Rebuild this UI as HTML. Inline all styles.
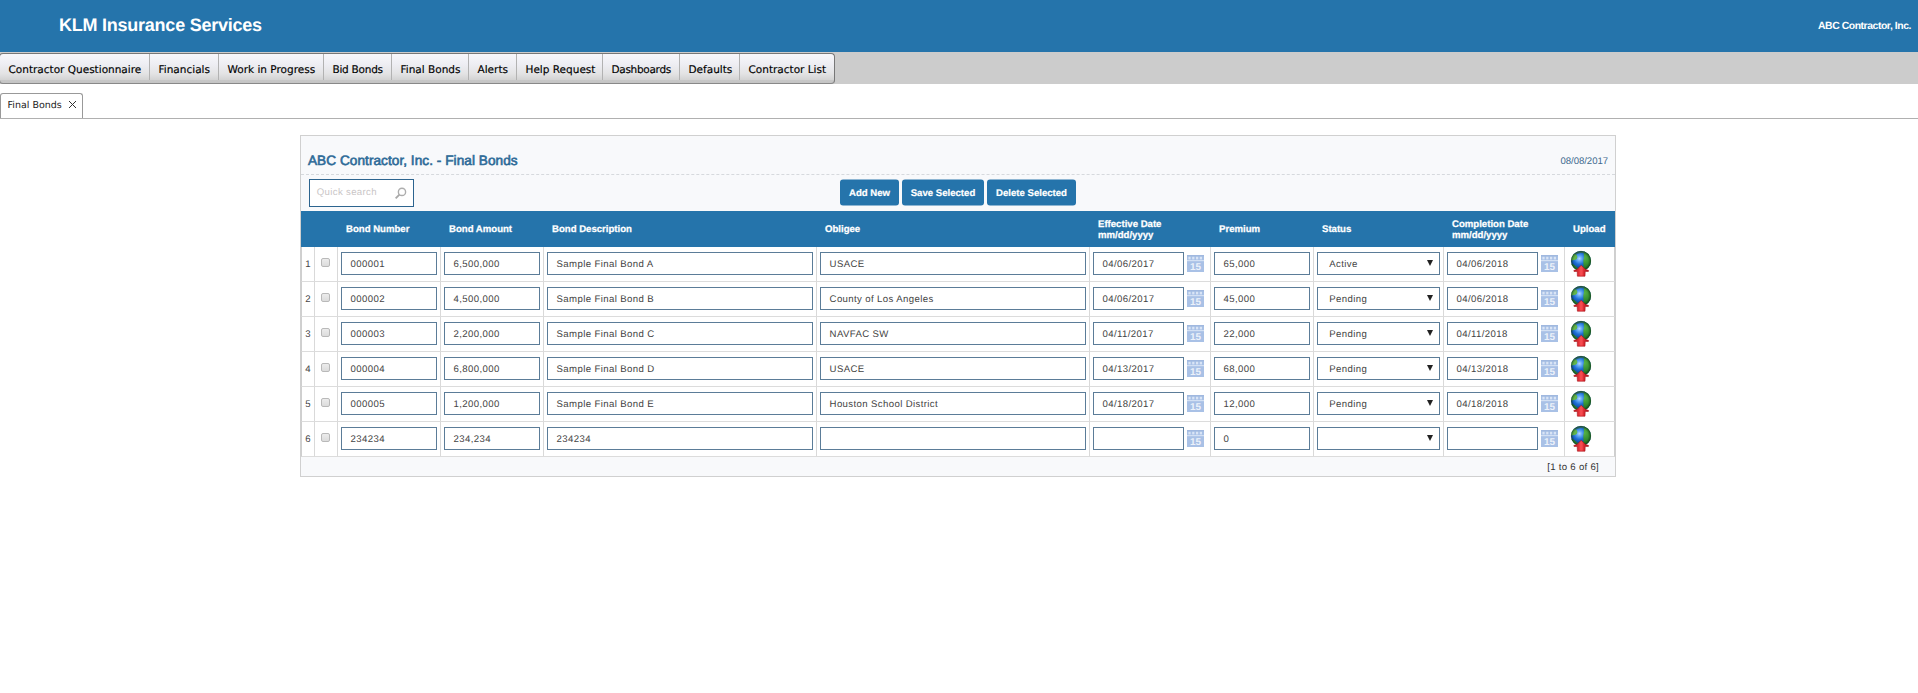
<!DOCTYPE html>
<html lang="en">
<head>
<meta charset="utf-8">
<title>KLM Insurance Services - Final Bonds</title>
<style>
*{box-sizing:border-box;margin:0;padding:0}
html,body{width:1918px;height:693px;overflow:hidden;background:#fff;font-family:"Liberation Sans",Arial,sans-serif;text-rendering:geometricPrecision}
body{position:relative}
#hdr{position:absolute;left:0;top:0;width:1918px;height:52px;background:#2574ab;color:#fff}
#hdr .brand{position:absolute;left:59px;top:14px;font-weight:bold;font-size:18px;line-height:22px;letter-spacing:-0.24px;white-space:nowrap}
#hdr .user{position:absolute;right:7px;top:20px;font-weight:bold;font-size:10.4px;line-height:13px;letter-spacing:-0.43px;white-space:nowrap}
#menuband{position:absolute;left:0;top:52px;width:1918px;height:32px;background:#cccccc}
#menu{position:absolute;left:-1px;top:1px;height:31px;width:836px;border:1px solid #777;border-bottom-color:#888;border-radius:4px;display:flex;overflow:hidden;padding-left:0;
 background:linear-gradient(#f7f7fb 0%,#eeeef3 35%,#e3e3e4 68%,#d4d4d4 88%,#c7c7c7 91%,#c4c4c4 100%)}
#menu a{display:block;flex:none;height:29px;line-height:32px;font-family:"DejaVu Sans","Liberation Sans",sans-serif;font-size:10.5px;color:#000;-webkit-text-stroke:0.15px #000;padding:0 0 0 8.5px;position:relative;white-space:nowrap;text-decoration:none}
#menu a::after{content:"";position:absolute;right:0;top:0;width:1px;height:26px;background:#b2b2b2}
#menu a:last-child::after{display:none}
#tabs{position:absolute;left:0;top:93px;width:1918px;height:26px;border-bottom:1px solid #b0b0b0}
#tabs .tab{position:absolute;left:0;top:0;width:83px;height:25px;border:1px solid #999;border-bottom:0;border-radius:3px 3px 0 0;background:#fff;font-family:"DejaVu Sans","Liberation Sans",sans-serif;font-size:9.5px;line-height:24px;color:#222;padding-left:6.5px;white-space:nowrap}
#tabs .tab .x{position:absolute;left:67px;top:6px;width:9px;height:9px}
#panel{position:absolute;left:300px;top:135px;width:1316px;height:342px;border:1px solid #d0d0d0;background:#f8f9fb}
#title{position:absolute;left:7px;top:15.6px;font-size:13.6px;line-height:18px;color:#2e6b98;letter-spacing:0.055px;white-space:nowrap;-webkit-text-stroke:0.62px #2e6b98}
#date{position:absolute;right:7px;top:20px;font-size:9.6px;line-height:12px;color:#3f6a8f;letter-spacing:-0.05px}
#dash{position:absolute;left:0;top:38px;width:1314px;height:0;border-top:1px dashed #d6d9dd}
#search{position:absolute;left:8px;top:43px;width:105px;height:28px;border:1px solid #2c648f;background:#fff;font-size:9.6px;line-height:26px;color:#c9c5c6;padding:0.4px 0 0 6.8px;letter-spacing:0.34px;white-space:nowrap}
#search svg{position:absolute;left:84.4px;top:6.6px;width:13px;height:13px}
.btn{position:absolute;top:44px;height:26px;transform:translateY(-0.45px);background:#2574ab;color:#fff;font-weight:bold;font-size:9.6px;line-height:27px;text-align:center;border-radius:3px;letter-spacing:0;-webkit-text-stroke:0.2px #fff;white-space:nowrap}
#grid{position:absolute;left:0;top:75px;width:1314px;border-collapse:separate;border-spacing:0;table-layout:fixed;background:#fff}
#grid th{background:#2574ab;color:#fff;-webkit-text-stroke:0.25px #fff;height:36px;font-size:9.6px;line-height:11px;font-weight:bold;text-align:left;padding:0 0 0 8px;letter-spacing:0;white-space:nowrap;vertical-align:middle}
#grid td{height:35px;border-right:1px solid #d9d9d9;border-bottom:1px solid #dcdcdc;padding:0;vertical-align:top;position:relative;font-size:10px;color:#333}
#grid td:last-child{border-right:1px solid #cfcfcf}
#grid td .in{position:absolute;left:3px;top:5px;right:3px;height:23px;border:1px solid #5b7c98;background:#fff;font-size:9.6px;line-height:21px;padding:1px 0 0 8.6px;color:#444;white-space:nowrap;letter-spacing:0.38px}
#grid td .in.d{right:26px}
#grid td .cal{position:absolute;right:6px;top:8px;width:17px;height:17px}
#grid td .sel::after{content:"";position:absolute;right:6.4px;top:7.2px;border-left:3.3px solid transparent;border-right:3.3px solid transparent;border-top:6px solid #222}
#grid td .sel{padding-left:11.3px}
#grid td.n{text-align:center;line-height:33px;padding-top:1px;font-size:9.6px;padding-left:0;border-left:1px solid #cfcfcf;color:#444}
#grid td .cb{position:absolute;left:6px;top:11px;width:9px;height:9px;border:1px solid #b9b9b9;border-radius:2px;background:linear-gradient(#ececec,#dcdcdc)}
#grid td .up{position:absolute;left:5px;top:3px;width:22px;height:28px}
#foot{position:absolute;right:16px;top:325px;font-size:9.6px;line-height:13px;color:#333;letter-spacing:0.28px}
#grid th.two{padding-top:2px}
#menu a.t1{letter-spacing:-0.25px}
#menu a.t2{letter-spacing:-0.3px}
</style>
</head>
<body>
<svg width="0" height="0" style="position:absolute">
<defs>
<radialGradient id="gl" gradientUnits="userSpaceOnUse" cx="9.4" cy="8.6" r="9.5"><stop offset="0" stop-color="#b4d8ff"/><stop offset="0.28" stop-color="#5ea6f4"/><stop offset="0.6" stop-color="#1f6fd6"/><stop offset="1" stop-color="#0e4aa0"/></radialGradient>
<radialGradient id="gg" gradientUnits="userSpaceOnUse" cx="14" cy="8" r="12"><stop offset="0" stop-color="#58b448"/><stop offset="0.55" stop-color="#348f30"/><stop offset="1" stop-color="#1e6422"/></radialGradient>
<radialGradient id="gs" gradientUnits="userSpaceOnUse" cx="11" cy="10.9" r="10"><stop offset="0.72" stop-color="#0a2a14" stop-opacity="0"/><stop offset="1" stop-color="#0a2a14" stop-opacity="0.55"/></radialGradient>
<linearGradient id="gr" x1="0" y1="0" x2="1" y2="0"><stop offset="0" stop-color="#bc1a22"/><stop offset="0.5" stop-color="#f43c42"/><stop offset="1" stop-color="#ac1018"/></linearGradient>
<clipPath id="gc"><circle cx="11" cy="10.9" r="10"/></clipPath>
<symbol id="cal" viewBox="0 0 17 17"><rect x="0" y="0" width="17" height="17" fill="#a9c1e6"/><rect x="0" y="0" width="17" height="1.4" fill="#a0b8df"/><g fill="#d9e4f5"><rect x="1.4" y="1.8" width="2.2" height="2.6"/><rect x="5.2" y="1.8" width="2.2" height="2.6"/><rect x="9" y="1.8" width="2.2" height="2.6"/><rect x="12.8" y="1.8" width="2.2" height="2.6"/></g><rect x="0" y="5" width="17" height="1.2" fill="#d3e0f3"/><text x="8.6" y="15" font-family="Liberation Sans, sans-serif" font-size="10" font-weight="bold" fill="#ecf1fa" text-anchor="middle">15</text></symbol>
<symbol id="up" viewBox="0 0 22 28"><circle cx="11" cy="10.9" r="10" fill="url(#gl)"/><g clip-path="url(#gc)"><path d="M14 0 C13 3.5 14.6 6 13.6 9 C12.8 12 14 14 13.2 17 C12.8 19 13.6 20.5 12.8 22 L23 22 L23 0 Z" fill="url(#gg)"/><path d="M0 4.2 L5.2 4 C8 5 8 8.6 5.4 9.8 C3.6 10.6 2.2 10 0 10.8 Z" fill="#62b64a"/><path d="M0 13.6 C3 13.6 4.8 15.2 6.2 16.8 C7.6 18.2 9.2 19 10.2 22 L0 22 Z" fill="#2e8830"/><path d="M3 0 H16 V3.4 C12.5 2.4 8 3 5.2 4.6 Z" fill="#3a7566" fill-opacity="0.85"/><circle cx="11" cy="10.9" r="10" fill="url(#gs)"/></g><circle cx="11" cy="10.9" r="9.7" fill="none" stroke="#14451c" stroke-opacity="0.5" stroke-width="0.6"/><path d="M11.2 15.3 L15.2 19.2 L18.6 20.6 L18.4 21.4 L15.2 21.4 L15 26.2 L7.4 26.2 L7.2 21.4 L4 21.4 L3.8 20.6 L7.2 19.2 Z" fill="url(#gr)" stroke="#a8121a" stroke-width="0.6" stroke-linejoin="round"/><path d="M9.6 17.4 L11.2 16 L12.8 17.4 L12.8 25.4 L9.6 25.4 Z" fill="#ff6a6a" fill-opacity="0.35"/></symbol>
</defs></svg>

<div id="hdr"><div class="brand">KLM Insurance Services</div><div class="user">ABC Contractor, Inc.</div></div>
<div id="menuband"><div id="menu"><a style="width:150px">Contractor Questionnaire</a><a style="width:69px">Financials</a><a style="width:105px">Work in Progress</a><a class="t1" style="width:68px">Bid Bonds</a><a style="width:77px">Final Bonds</a><a style="width:48px">Alerts</a><a style="width:86px">Help Request</a><a class="t2" style="width:77px">Dashboards</a><a style="width:60px">Defaults</a><a style="width:94px">Contractor List</a></div></div>
<div id="tabs"><div class="tab"><span>Final Bonds</span><svg class="x" viewBox="0 0 9 9"><path d="M1 1 L8 8 M8 1 L1 8" stroke="#333" stroke-width="1" fill="none"/></svg></div></div>
<div id="panel">
<div id="title">ABC Contractor, Inc. - Final Bonds</div>
<div id="date">08/08/2017</div>
<div id="dash"></div>
<div id="search"><span>Quick search</span><svg width="14" height="14" viewBox="0 0 14 14"><circle cx="8.6" cy="5.3" r="3.9" fill="none" stroke="#adadad" stroke-width="1.5"/><path d="M5.8 8.2 L1.8 12.2" stroke="#a8a8a8" stroke-width="2"/></svg></div>
<div class="btn" style="left:539px;width:59px">Add New</div>
<div class="btn" style="left:601px;width:82px">Save Selected</div>
<div class="btn" style="left:686px;width:89px">Delete Selected</div>
<table id="grid">
<colgroup><col style="width:14px"><col style="width:23px"><col style="width:103px"><col style="width:103px"><col style="width:273px"><col style="width:273px"><col style="width:121px"><col style="width:103px"><col style="width:130px"><col style="width:121px"><col style="width:50px"></colgroup>
<thead><tr><th></th><th></th><th>Bond Number</th><th>Bond Amount</th><th>Bond Description</th><th>Obligee</th><th class="two">Effective Date<br>mm/dd/yyyy</th><th>Premium</th><th>Status</th><th class="two">Completion Date<br>mm/dd/yyyy</th><th>Upload</th></tr></thead>
<tbody>
<tr><td class="n">1</td><td><div class="cb"></div></td><td><div class="in">000001</div></td><td><div class="in">6,500,000</div></td><td><div class="in">Sample Final Bond A</div></td><td><div class="in">USACE</div></td><td><div class="in d">04/06/2017</div><svg class="cal"><use href="#cal"/></svg></td><td><div class="in">65,000</div></td><td><div class="in sel">Active</div></td><td><div class="in d">04/06/2018</div><svg class="cal"><use href="#cal"/></svg></td><td><svg class="up"><use href="#up"/></svg></td></tr>
<tr><td class="n">2</td><td><div class="cb"></div></td><td><div class="in">000002</div></td><td><div class="in">4,500,000</div></td><td><div class="in">Sample Final Bond B</div></td><td><div class="in">County of Los Angeles</div></td><td><div class="in d">04/06/2017</div><svg class="cal"><use href="#cal"/></svg></td><td><div class="in">45,000</div></td><td><div class="in sel">Pending</div></td><td><div class="in d">04/06/2018</div><svg class="cal"><use href="#cal"/></svg></td><td><svg class="up"><use href="#up"/></svg></td></tr>
<tr><td class="n">3</td><td><div class="cb"></div></td><td><div class="in">000003</div></td><td><div class="in">2,200,000</div></td><td><div class="in">Sample Final Bond C</div></td><td><div class="in">NAVFAC SW</div></td><td><div class="in d">04/11/2017</div><svg class="cal"><use href="#cal"/></svg></td><td><div class="in">22,000</div></td><td><div class="in sel">Pending</div></td><td><div class="in d">04/11/2018</div><svg class="cal"><use href="#cal"/></svg></td><td><svg class="up"><use href="#up"/></svg></td></tr>
<tr><td class="n">4</td><td><div class="cb"></div></td><td><div class="in">000004</div></td><td><div class="in">6,800,000</div></td><td><div class="in">Sample Final Bond D</div></td><td><div class="in">USACE</div></td><td><div class="in d">04/13/2017</div><svg class="cal"><use href="#cal"/></svg></td><td><div class="in">68,000</div></td><td><div class="in sel">Pending</div></td><td><div class="in d">04/13/2018</div><svg class="cal"><use href="#cal"/></svg></td><td><svg class="up"><use href="#up"/></svg></td></tr>
<tr><td class="n">5</td><td><div class="cb"></div></td><td><div class="in">000005</div></td><td><div class="in">1,200,000</div></td><td><div class="in">Sample Final Bond E</div></td><td><div class="in">Houston School District</div></td><td><div class="in d">04/18/2017</div><svg class="cal"><use href="#cal"/></svg></td><td><div class="in">12,000</div></td><td><div class="in sel">Pending</div></td><td><div class="in d">04/18/2018</div><svg class="cal"><use href="#cal"/></svg></td><td><svg class="up"><use href="#up"/></svg></td></tr>
<tr><td class="n">6</td><td><div class="cb"></div></td><td><div class="in">234234</div></td><td><div class="in">234,234</div></td><td><div class="in">234234</div></td><td><div class="in"></div></td><td><div class="in d"></div><svg class="cal"><use href="#cal"/></svg></td><td><div class="in">0</div></td><td><div class="in sel"></div></td><td><div class="in d"></div><svg class="cal"><use href="#cal"/></svg></td><td><svg class="up"><use href="#up"/></svg></td></tr>
</tbody></table>
<div id="foot">[1 to 6 of 6]</div>
</div>
</body>
</html>
